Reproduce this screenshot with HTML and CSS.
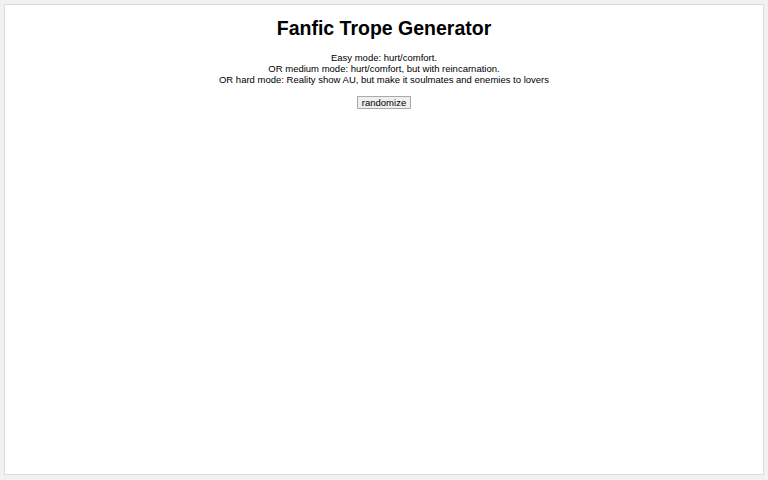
FILE: index.html
```html
<!DOCTYPE html>
<html lang="en">
<head>
  <meta charset="UTF-8">
  <title>Fanfic Trope Generator</title>
  <link rel="stylesheet" href="styles.css">
</head>
<body>
  <div class="page">
    <h1>Fanfic Trope Generator</h1>
    <p id="trope">
      Easy mode: hurt/comfort.<br>
      OR medium mode: hurt/comfort, but with reincarnation.<br>
      OR hard mode: Reality show AU, but make it soulmates and enemies to lovers
    </p>
    <button id="randomize">randomize</button>
  </div>
</body>
</html>
```

FILE: styles.css
```css
html, body {
  height: 100%;
  margin: 0;
}

body {
  background-color: #f1f1f1;
  font-family: 'Liberation Sans', Arial, sans-serif;
  color: #000;
  padding: 4px 4px 5px;
  box-sizing: border-box;
}

.page {
  height: 100%;
  box-sizing: border-box;
  background-color: #fff;
  border: 1px solid #dcdcdc;
  text-align: center;
  padding-top: 12px;
}

h1 {
  font-size: 19.5px;
  margin: 0 0 12px;
}

#trope {
  font-size: 9.5px;
  line-height: 11px;
  margin: 0 0 7px;
}

button {
  font-family: 'Liberation Sans', Arial, sans-serif;
  font-size: 9.5px;
  padding: 0 4px;
  background-color: #efefef;
  border: 1px solid #aaa;
  border-radius: 0;
}
```
